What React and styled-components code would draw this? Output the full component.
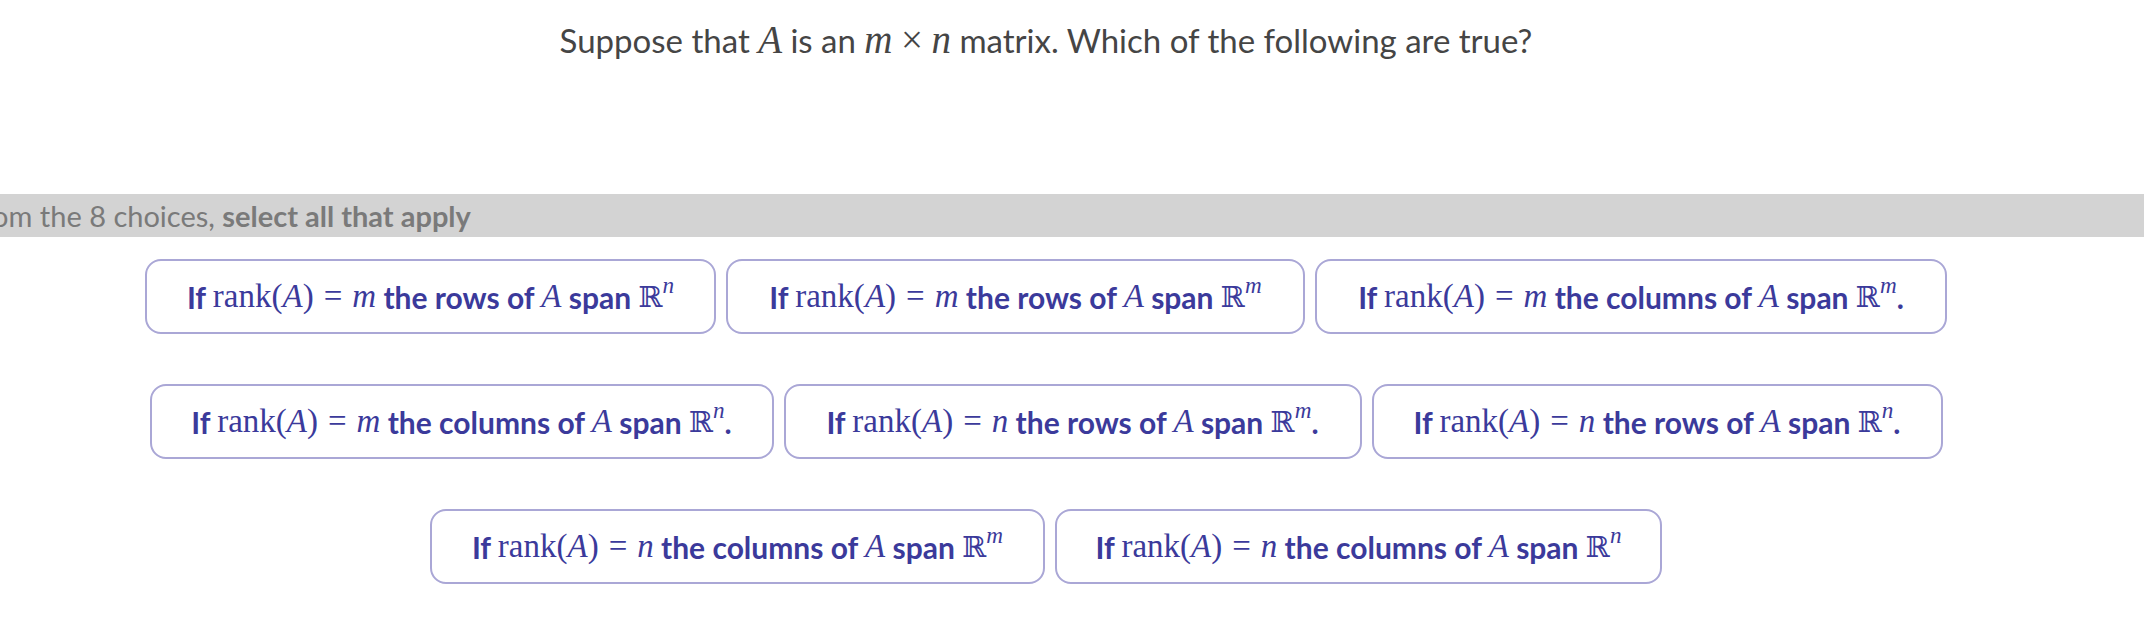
import React from 'react';
import styled, {createGlobalStyle} from 'styled-components';

const GlobalStyle = createGlobalStyle`
  body {
    margin: 0;
    background: #ffffff;
    font-family: "Lato", "Open Sans", sans-serif;
    overflow: hidden;
  }
`

const Page = styled.div`
  width: 2092px;
  display: flex;
  flex-direction: column;
`
const Header = styled.div`
  height: 194px;
  box-sizing: border-box;
  padding-top: 17px;
  text-align: center;
  font-size: 33px;
  line-height: 46px;
  color: #454545;
`
const Instructions = styled.div`
  width: 2144px;
  height: 43px;
  background: #d3d3d3;
  color: #7a7a7a;
  font-size: 29px;
  line-height: 43px;
  white-space: nowrap;
  overflow: hidden;
  span {
    display: inline-block;
    margin-left: -33px;
  }
  b {
    font-weight: 700;
  }
`
const Choices = styled.div`
  display: flex;
  flex-direction: column;
  gap: 50px;
  padding-top: 22px;
`
const Row = styled.div`
  display: flex;
  justify-content: center;
  gap: 10px;
`
const Choice = styled.button`
  width: ${p => p.$w}px;
  height: 75px;
  box-sizing: border-box;
  border: 2px solid #aaa7d6;
  border-radius: 16px;
  background: #fff;
  color: #3b3a9b;
  font-family: "Lato", "Open Sans", sans-serif;
  font-weight: 700;
  font-size: 30px;
  display: flex;
  align-items: center;
  justify-content: center;
  white-space: nowrap;
  padding: 0;
  cursor: pointer;
`
const M = styled.span`
  font-family: "Liberation Serif", "DejaVu Serif", serif;
  font-weight: 400;
  font-size: ${p => p.$size || 33}px;
  font-style: ${p => (p.$up ? 'normal' : 'italic')};
  margin: 0 ${p => p.$gap || 0}px;
`
const Sup = styled.sup`
  font-family: "Liberation Serif", serif;
  font-style: italic;
  font-size: 0.8em;
  vertical-align: 0.6em;
  line-height: 0;
`
const Real = styled.span`
  font-family: "DejaVu Serif", serif;
  font-weight: 400;
  font-size: 29px;
`

const Expr = ({v, what, R, dot}) => (
    <>
        If&nbsp;
        <M $up>rank(</M><M>A</M><M $up>)</M>
        <M $up $gap={10}>=</M>
        <M>{v}</M>&nbsp;the {what} of&nbsp;<M>A</M>&nbsp;span&nbsp;
        <Real>ℝ<Sup>{R}</Sup></Real>{dot && '.'}
    </>
)

const rows = [
    [
        {v: 'm', what: 'rows', R: 'n', w: 571},
        {v: 'm', what: 'rows', R: 'm', w: 579},
        {v: 'm', what: 'columns', R: 'm', dot: true, w: 632},
    ],
    [
        {v: 'm', what: 'columns', R: 'n', dot: true, w: 624},
        {v: 'n', what: 'rows', R: 'm', dot: true, w: 578},
        {v: 'n', what: 'rows', R: 'n', dot: true, w: 571},
    ],
    [
        {v: 'n', what: 'columns', R: 'm', w: 615},
        {v: 'n', what: 'columns', R: 'n', w: 607},
    ],
]

export default function App() {
    return (
        <>
            <GlobalStyle/>
            <Page>
                <Header>
                    Suppose that <M $size={39}>A</M> is an <M $size={39}>m</M> <M $up $size={39}>×</M> <M $size={39}>n</M> matrix. Which of the following are true?
                </Header>
                <Instructions>
                    <span>From the 8 choices, <b>select all that apply</b></span>
                </Instructions>
                <Choices>
                    {rows.map((row, i) => (
                        <Row key={i}>
                            {row.map((c, j) => (
                                <Choice key={j} $w={c.w}>
                                    <Expr {...c}/>
                                </Choice>
                            ))}
                        </Row>
                    ))}
                </Choices>
            </Page>
        </>
    );
}
